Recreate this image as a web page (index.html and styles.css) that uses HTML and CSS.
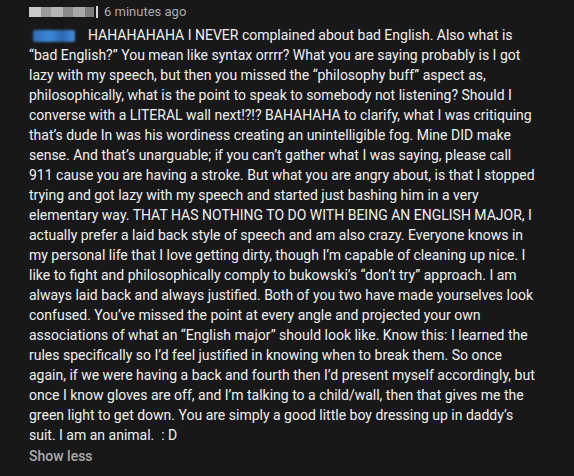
FILE: index.html
```html
<!DOCTYPE html>
<html>
<head>
<meta charset="utf-8">
<link rel="stylesheet" href="styles.css">
</head>
<body>
<div class="comment">
  <div class="header">
    <span class="author"><span class="blk b1"></span><span class="blk b2"></span><span class="blk b3"></span><span class="blk b4"></span><span class="blk b5"></span><span class="blk b6"></span><span class="bar"></span></span>
    <span class="time">6 minutes ago</span>
  </div>
  <div class="text"><span class="mention"></span>HAHAHAHAHA I NEVER complained about bad English. Also what is<br>“bad English?” You mean like syntax orrrr? What you are saying probably is I got<br>lazy with my speech, but then you missed the “philosophy buff” aspect as,<br>philosophically, what is the point to speak to somebody not listening? Should I<br>converse with a LITERAL wall next!?!? BAHAHAHA to clarify, what I was critiquing<br>that’s dude In was his wordiness creating an unintelligible fog. Mine DID make<br>sense. And that’s unarguable; if you can’t gather what I was saying, please call<br>911 cause you are having a stroke. But what you are angry about, is that I stopped<br>trying and got lazy with my speech and started just bashing him in a very<br>elementary way. THAT HAS NOTHING TO DO WITH BEING AN ENGLISH MAJOR, I<br>actually prefer a laid back style of speech and am also crazy. Everyone knows in<br>my personal life that I love getting dirty, though I’m capable of cleaning up nice. I<br>like to fight and philosophically comply to bukowski’s “don’t try” approach. I am<br>always laid back and always justified. Both of you two have made yourselves look<br>confused. You’ve missed the point at every angle and projected your own<br>associations of what an “English major” should look like. Know this: I learned the<br>rules specifically so I’d feel justified in knowing when to break them. So once<br>again, if we were having a back and fourth then I’d present myself accordingly, but<br>once I know gloves are off, and I’m talking to a child/wall, then that gives me the<br>green light to get down. You are simply a good little boy dressing up in daddy’s<br>suit. I am an animal. &nbsp;: D</div>
  <div class="more">Show less</div>
</div>
</body>
</html>
```
FILE: styles.css
```css
html, body {
  margin: 0;
  padding: 0;
  background: #181818;
}
body {
  width: 574px;
  height: 476px;
  overflow: hidden;
  font-family: Roboto, "Liberation Sans", sans-serif;
}
.comment {
  padding: 3px 0 0 29px;
}
.header {
  display: flex;
  align-items: center;
  height: 18px;
  gap: 6px;
}
.author {
  display: flex;
  align-items: center;
  height: 10px;
  filter: blur(0.6px);
}
.blk {
  display: block;
  height: 10px;
}
.b1 { width: 12px; background: #c9c9c9; }
.b2 { width: 10px; background: #9a9a9a; }
.b3 { width: 12px; background: #b5b5b5; }
.b4 { width: 10px; background: #8a8a8a; }
.b5 { width: 12px; background: #a8a8a8; }
.b6 { width: 9px; background: #7d7d7d; }
.bar {
  display: block;
  width: 2px;
  height: 12px;
  margin-left: 2px;
  background: #d8d8d8;
}
.time {
  font-size: 13px;
  line-height: 18px;
  color: #aaaaaa;
}
.text {
  margin-top: 4px;
  font-size: 14px;
  line-height: 20px;
  color: #f1f1f1;
  white-space: nowrap;
}
.mention {
  display: inline-block;
  width: 42px;
  height: 12px;
  margin: 0 13px 0 4px;
  vertical-align: -2px;
  background: linear-gradient(90deg, #2f6fb8, #3b86d8 40%, #2d69ad 70%, #3e8be0);
  border-radius: 2px;
  filter: blur(1.2px);
}
.more {
  margin-top: 0;
  font-size: 14px;
  line-height: 22px;
  font-weight: 500;
  color: #aaaaaa;
}
```
